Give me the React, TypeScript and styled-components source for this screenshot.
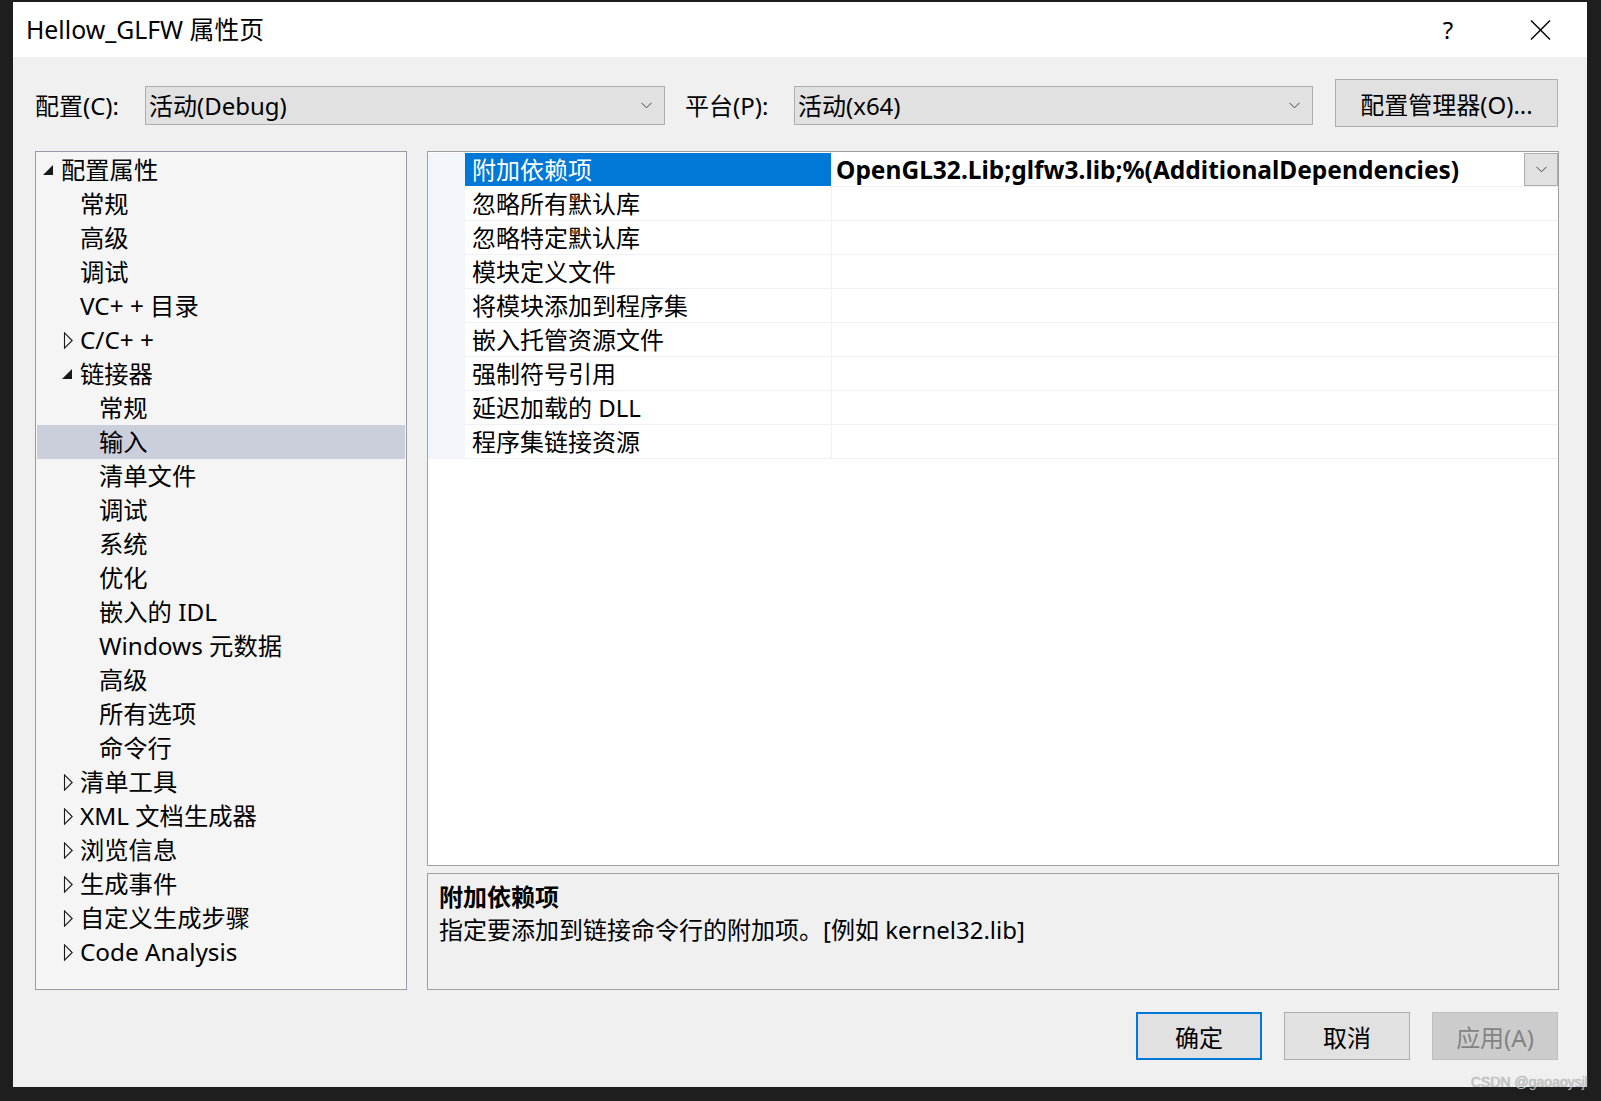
import React from "react";
import styled, { createGlobalStyle } from "styled-components";

const GlobalStyle = createGlobalStyle`
  html, body {
    margin: 0;
    padding: 0;
    background: #1e1e1e;
  }
  body {
    font-family: "Noto Sans", "Noto Sans CJK SC", sans-serif;
    color: #000;
  }
  * { box-sizing: border-box; }
`;

const Page = styled.div`
  position: relative;
  width: 1601px;
  height: 1101px;
  padding: 2px 0 0 13px;
  overflow: hidden;
  background: #1e1e1e;
`;

const Dialog = styled.div`
  width: 1574px;
  height: 1085px;
  background: #f0f0f0;
  display: flex;
  flex-direction: column;
  font-size: 24px;
`;

const TitleBar = styled.div`
  height: 55px;
  background: #ffffff;
  display: flex;
  align-items: center;
  padding: 0 1px 0 13px;
`;

const TitleText = styled.div`
  font-size: 24.8px;
  line-height: 55px;
  color: #000;
  white-space: nowrap;
`;

const TitleButtons = styled.div`
  margin-left: auto;
  display: flex;
`;

const TitleButton = styled.div`
  width: 92px;
  height: 55px;
  display: flex;
  align-items: center;
  justify-content: center;
  font-size: 24px;
  color: #000;
`;

const Body = styled.div`
  flex: 1;
  display: flex;
  flex-direction: column;
  padding: 22px 28px 0 22px;
`;

const ConfigRow = styled.div`
  height: 48px;
  display: flex;
  align-items: flex-start;
`;

const FieldLabel = styled.div<{ $w: number; $ml?: number }>`
  width: ${(p) => p.$w}px;
  margin-left: ${(p) => p.$ml ?? 0}px;
  margin-top: 7px;
  height: 39px;
  line-height: 39px;
  white-space: nowrap;
`;

const Combo = styled.div<{ $w: number }>`
  width: ${(p) => p.$w}px;
  height: 39px;
  margin-top: 7px;
  background: #e1e1e1;
  border: 1px solid #adadad;
  display: flex;
  align-items: center;
  padding: 0 12px 0 3px;
  line-height: 37px;
  white-space: nowrap;
`;

const ComboText = styled.span`
  flex: 1;
`;

const Button = styled.div<{ $w: number; $primary?: boolean; $disabled?: boolean; $ml?: number }>`
  width: ${(p) => p.$w}px;
  height: 48px;
  margin-left: ${(p) => p.$ml ?? 0}px;
  display: flex;
  align-items: center;
  justify-content: center;
  white-space: nowrap;
  background: ${(p) => (p.$disabled ? "#cccccc" : "#e1e1e1")};
  border: ${(p) => (p.$primary ? "2px solid #0078d7" : p.$disabled ? "1px solid #bfbfbf" : "1px solid #adadad")};
  color: ${(p) => (p.$disabled ? "#838383" : "#000")};
`;

const MainArea = styled.div`
  margin-top: 24px;
  height: 839px;
  display: flex;
  gap: 20px;
`;

const Tree = styled.div`
  width: 372px;
  height: 839px;
  border: 1px solid #9a9aa6;
  background: #f5f5f5;
  padding: 1px;
  font-size: 24.3px;
`;

const TreeRow = styled.div<{ $level: number; $selected?: boolean }>`
  height: 34px;
  display: flex;
  align-items: center;
  padding-left: ${(p) => 6 + p.$level * 19}px;
  background: ${(p) => (p.$selected ? "#cbcedb" : "transparent")};
  white-space: nowrap;
  line-height: 34px;
`;

const ToggleSlot = styled.div`
  width: 18px;
  height: 34px;
  display: flex;
  align-items: center;
  flex-shrink: 0;
`;

const TreeLabel = styled.span``;

const RightColumn = styled.div`
  flex: 1;
  display: flex;
  flex-direction: column;
  gap: 7px;
`;

const Grid = styled.div`
  height: 715px;
  border: 1px solid #a0a0a0;
  background: #ffffff;
  padding-top: 1px;
`;

const GridRow = styled.div`
  height: 34px;
  display: flex;
`;

const GridMargin = styled.div`
  width: 37px;
  background: #f2f5fa;
`;

const NameCell = styled.div<{ $selected?: boolean }>`
  width: 366px;
  height: 34px;
  border-bottom: 1px solid ${(p) => (p.$selected ? "#ffffff" : "#eef1f7")};
  background: ${(p) => (p.$selected ? "#0078d7" : "#ffffff")};
  color: ${(p) => (p.$selected ? "#ffffff" : "#000")};
  padding-left: 7px;
  line-height: 33px;
  white-space: nowrap;
`;

const ValueCell = styled.div`
  flex: 1;
  height: 34px;
  border-left: 1px solid #eef1f7;
  border-bottom: 1px solid #eef1f7;
  display: flex;
  align-items: flex-start;
  padding-left: 4px;
  line-height: 33px;
  white-space: nowrap;
`;

const ValueText = styled.span`
  flex: 1;
  font-weight: 700;
  font-size: 24.5px;
`;

const DropButton = styled.div`
  width: 34px;
  height: 33px;
  background: #e1e1e1;
  border: 1px solid #adadad;
  display: flex;
  align-items: center;
  justify-content: center;
`;

const Description = styled.div`
  height: 117px;
  border: 1px solid #a0a0a0;
  background: #f0f0f0;
  padding: 6px 12px 6px 11px;
  line-height: 33px;
`;

const DescTitle = styled.div`
  font-weight: 700;
`;

const DescText = styled.div``;

const ButtonRow = styled.div`
  margin-top: 22px;
  display: flex;
  justify-content: flex-end;
  gap: 22px;
  padding-right: 1px;
`;

const Watermark = styled.div`
  position: absolute;
  left: 1471px;
  top: 1074px;
  font-family: "Liberation Sans", "Noto Sans", sans-serif;
  font-size: 14px;
  color: rgba(205, 205, 205, 0.85);
  text-shadow: 0 0 1px rgba(80, 80, 80, 0.6);
  white-space: nowrap;
`;

const Chevron = ({ w = 11 }: { w?: number }) => (
  <svg width={w} height="7" viewBox="0 0 11 7">
    <polyline points="0.5,0.8 5.5,5.8 10.5,0.8" fill="none" stroke="#444" strokeWidth="1" />
  </svg>
);

const Expanded = () => (
  <svg width="11" height="10" viewBox="0 0 11 10">
    <polygon points="10,0 10,10 0,10" fill="#1a1a1a" />
  </svg>
);

const Collapsed = () => (
  <svg width="11" height="17" viewBox="0 0 11 17">
    <polygon points="2.5,0.8 10.2,8.5 2.5,16.2" fill="none" stroke="#1a1a1a" strokeWidth="1.1" />
  </svg>
);

const CloseIcon = () => (
  <svg width="21" height="20" viewBox="0 0 21 20">
    <line x1="1" y1="0.5" x2="20" y2="19.5" stroke="#000" strokeWidth="1.4" />
    <line x1="20" y1="0.5" x2="1" y2="19.5" stroke="#000" strokeWidth="1.4" />
  </svg>
);

type TreeItem = { label: string; level: number; toggle?: "open" | "closed"; selected?: boolean };

const treeItems: TreeItem[] = [
  { label: "配置属性", level: 0, toggle: "open" },
  { label: "常规", level: 1 },
  { label: "高级", level: 1 },
  { label: "调试", level: 1 },
  { label: "VC+ + 目录", level: 1 },
  { label: "C/C+ +", level: 1, toggle: "closed" },
  { label: "链接器", level: 1, toggle: "open" },
  { label: "常规", level: 2 },
  { label: "输入", level: 2, selected: true },
  { label: "清单文件", level: 2 },
  { label: "调试", level: 2 },
  { label: "系统", level: 2 },
  { label: "优化", level: 2 },
  { label: "嵌入的 IDL", level: 2 },
  { label: "Windows 元数据", level: 2 },
  { label: "高级", level: 2 },
  { label: "所有选项", level: 2 },
  { label: "命令行", level: 2 },
  { label: "清单工具", level: 1, toggle: "closed" },
  { label: "XML 文档生成器", level: 1, toggle: "closed" },
  { label: "浏览信息", level: 1, toggle: "closed" },
  { label: "生成事件", level: 1, toggle: "closed" },
  { label: "自定义生成步骤", level: 1, toggle: "closed" },
  { label: "Code Analysis", level: 1, toggle: "closed" },
];

const gridItems = [
  "附加依赖项",
  "忽略所有默认库",
  "忽略特定默认库",
  "模块定义文件",
  "将模块添加到程序集",
  "嵌入托管资源文件",
  "强制符号引用",
  "延迟加载的 DLL",
  "程序集链接资源",
];

export default function App() {
  return (
    <>
      <GlobalStyle />
      <Page>
        <Dialog>
          <TitleBar>
            <TitleText>Hellow_GLFW 属性页</TitleText>
            <TitleButtons>
              <TitleButton>?</TitleButton>
              <TitleButton>
                <CloseIcon />
              </TitleButton>
            </TitleButtons>
          </TitleBar>
          <Body>
            <ConfigRow>
              <FieldLabel $w={110}>配置(C):</FieldLabel>
              <Combo $w={520}>
                <ComboText>活动(Debug)</ComboText>
                <Chevron />
              </Combo>
              <FieldLabel $w={109} $ml={20}>平台(P):</FieldLabel>
              <Combo $w={519}>
                <ComboText>活动(x64)</ComboText>
                <Chevron />
              </Combo>
              <Button $w={223} $ml={22}>配置管理器(O)...</Button>
            </ConfigRow>
            <MainArea>
              <Tree>
                {treeItems.map((it, i) => (
                  <TreeRow key={i} $level={it.level} $selected={it.selected}>
                    <ToggleSlot>
                      {it.toggle === "open" && <Expanded />}
                      {it.toggle === "closed" && <Collapsed />}
                    </ToggleSlot>
                    <TreeLabel>{it.label}</TreeLabel>
                  </TreeRow>
                ))}
              </Tree>
              <RightColumn>
                <Grid>
                  {gridItems.map((name, i) => (
                    <GridRow key={i}>
                      <GridMargin />
                      <NameCell $selected={i === 0}>{name}</NameCell>
                      <ValueCell>
                        {i === 0 && (
                          <>
                            <ValueText>OpenGL32.Lib;glfw3.lib;%(AdditionalDependencies)</ValueText>
                            <DropButton>
                              <Chevron />
                            </DropButton>
                          </>
                        )}
                      </ValueCell>
                    </GridRow>
                  ))}
                </Grid>
                <Description>
                  <DescTitle>附加依赖项</DescTitle>
                  <DescText>指定要添加到链接命令行的附加项。[例如 kernel32.lib]</DescText>
                </Description>
              </RightColumn>
            </MainArea>
            <ButtonRow>
              <Button $w={126} $primary>确定</Button>
              <Button $w={126}>取消</Button>
              <Button $w={126} $disabled>应用(A)</Button>
            </ButtonRow>
          </Body>
        </Dialog>
        <Watermark>CSDN @gaoaoysjl</Watermark>
      </Page>
    </>
  );
}
